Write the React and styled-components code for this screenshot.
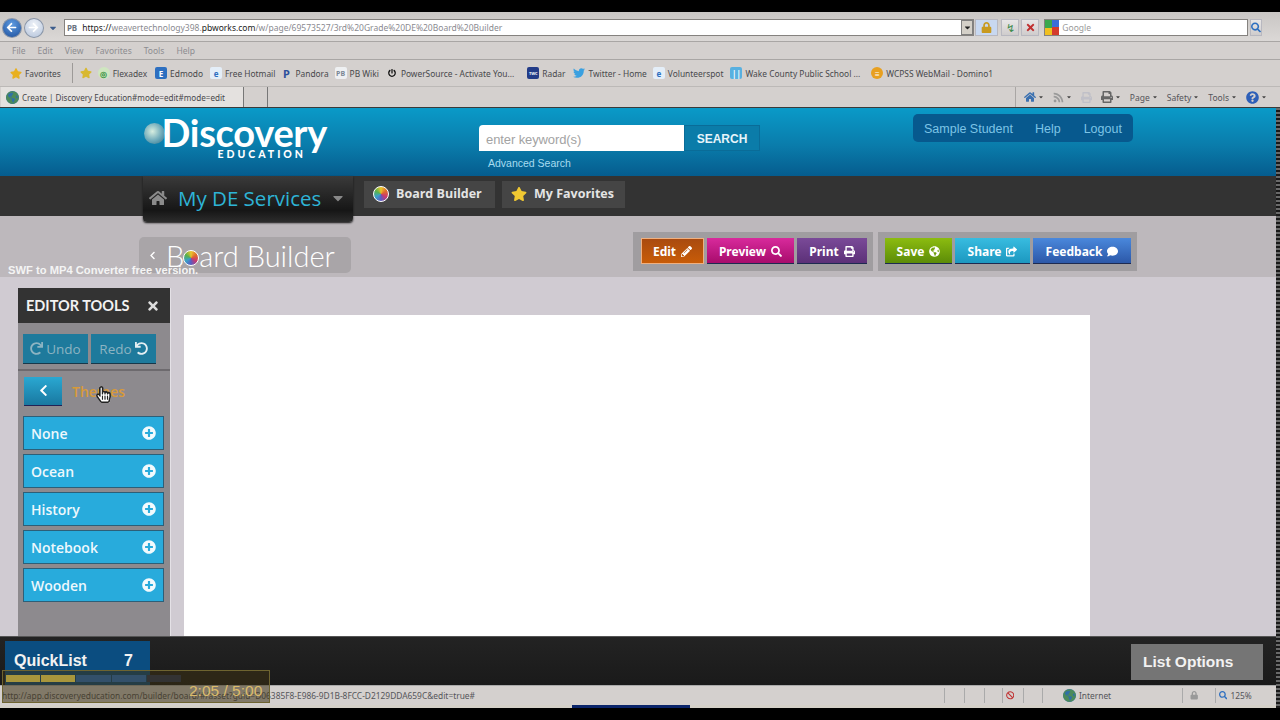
import React from 'react';
import styled, { createGlobalStyle } from 'styled-components';
import {
  FaArrowLeft, FaArrowRight, FaBan, FaCaretDown, FaChevronLeft, FaComment, FaGlobeAmericas, FaHandPointer, FaHome,
  FaLock, FaPencilAlt, FaPlusCircle, FaPrint, FaRedo, FaRegHandPointer, FaSearch, FaShareSquare, FaStar,
  FaTimes, FaTwitter, FaUndo, FaPowerOff, FaRss, FaQuestionCircle,
} from 'react-icons/fa';

const GlobalStyle = createGlobalStyle`
  html, body { margin: 0; padding: 0; background: #000; overflow: hidden; }
  * { box-sizing: border-box; }
`;

const Screen = styled.div`
  position: relative;
  width: 1280px;
  height: 720px;
  background: #000;
  padding-top: 12px;
  overflow: hidden;
  font-family: "Noto Sans", "Liberation Sans", sans-serif;
`;

/* browser chrome */
const Chrome = styled.div`
  background: #d4d0ce;
  height: 96px;
  color: #55555a;
  font-size: 8.5px;
  display: flex;
  flex-direction: column;
`;
const AddressRow = styled.div`
  height: 30px;
  display: flex;
  align-items: center;
  padding: 3px 18px 0 2px;
  border-bottom: 1px solid #a9a6a4;
  background: linear-gradient(#c9c6c4, #dbd8d6);
`;
const NavCircle = styled.span`
  width: 20px;
  height: 20px;
  margin-right: 2px;
  border-radius: 50%;
  display: flex;
  align-items: center;
  justify-content: center;
  color: #fff;
  font-size: 11px;
  background: ${p => p.$big ? 'radial-gradient(circle at 50% 30%, #5e9be0, #1d4f9c)' : 'radial-gradient(circle at 50% 30%, #eef2f8, #b4c3da)'};
  border: 1px solid #8a96a8;
`;
const DropArrow = styled.span`
  display: flex;
  width: 18px;
  padding-left: 2px;
  color: #3d5d8c;
  font-size: 10px;
`;
const UrlBox = styled.div`
  width: 912px;
  height: 17px;
  background: #fff;
  border: 1px solid #85827f;
  display: flex;
  align-items: center;
  padding-left: 2px;
  font-size: 8.5px;
  white-space: nowrap;
  color: #8a8a90;
`;
const PbMark = styled.span`
  color: #6a7480;
  font-weight: 700;
  font-size: 8px;
  margin-right: 5px;
`;
const Dark = styled.span`
  color: #222;
`;
const UrlDrop = styled.span`
  margin-left: auto;
  width: 12px;
  height: 15px;
  background: #d4d0c8;
  border: 1px solid #808080;
  color: #222;
  display: flex;
  align-items: center;
  justify-content: center;
  font-size: 9px;
`;
const ChromeBtn = styled.span`
  width: ${p => p.$w || 20}px;
  height: 17px;
  margin-left: ${p => p.$gap || 2}px;
  display: flex;
  align-items: center;
  justify-content: center;
  font-size: 11px;
  color: ${p => p.$color || '#444'};
  background: ${p => p.$bg || 'linear-gradient(#e8e6e6, #cfcccc)'};
  border: 1px solid #b8b8c0;
`;
const SearchBox = styled.div`
  width: 204px;
  height: 17px;
  margin-left: 5px;
  background: #fff;
  border: 1px solid #85827f;
  display: flex;
  align-items: center;
  gap: 3px;
  color: #999;
  font-size: 8.5px;
`;
const GoogleMark = styled.span`
  width: 14px;
  height: 15px;
  background: conic-gradient(#3b6fd8 0 25%, #d43c2c 25% 50%, #f0c020 50% 75%, #3aa84c 75%);
`;
const MenuRow = styled.div`
  height: 19px;
  display: flex;
  align-items: center;
  gap: 12px;
  padding-left: 12px;
  color: #8c8c90;
  font-size: 8.5px;
  border-bottom: 1px solid #a9a6a4;
`;
const FavRow = styled.div`
  height: 27px;
  display: flex;
  align-items: center;
  padding-left: 10px;
  white-space: nowrap;
  color: #48484c;
  font-size: 8.4px;
  border-bottom: 1px solid #bcb9b7;
`;
const FavLabel = styled.span`
  display: flex;
  align-items: center;
  gap: 3px;
  margin-right: ${p => p.$gap || 0}px;
`;
const FavIcon = styled.span`
  width: 12px;
  height: 12px;
  flex: none;
  display: flex;
  align-items: center;
  justify-content: center;
  font-size: ${p => p.$fs || 8}px;
  font-weight: 700;
  color: ${p => p.$color || '#fff'};
  background: ${p => p.$bg || 'transparent'};
  border-radius: ${p => p.$round ? '50%' : '2px'};
`;
const FavDivider = styled.span`
  width: 1px;
  height: 20px;
  background: #9d9a98;
  margin: 0 7px 0 11px;
`;
const TabRow = styled.div`
  flex: 1;
  display: flex;
  align-items: flex-end;
  border-bottom: 1px solid #3a3a3a;
`;
const ActiveTab = styled.div`
  width: 243px;
  height: 20px;
  margin-left: 1px;
  padding-left: 5px;
  display: flex;
  align-items: center;
  gap: 3px;
  background: #e4e1df;
  border-right: 1px solid #777;
  color: #48484c;
  font-size: 8.1px;
  white-space: nowrap;
`;
const Globe = styled.span`
  width: 13px;
  height: 13px;
  flex: none;
  display: flex;
  align-items: center;
  justify-content: center;
  border-radius: 50%;
  color: #4c8a5a;
  background: #2f6fa8;
  font-size: 13px;
`;
const NewTab = styled.div`
  width: 24px;
  height: 20px;
  background: #d4d0ce;
  border-right: 1px solid #777;
`;
const CommandBar = styled.div`
  margin-left: auto;
  display: flex;
  align-items: center;
  gap: 9px;
  height: 20px;
  padding: 0 13px 0 8px;
  border-left: 1px solid #a9a6a4;
  font-size: 8.5px;
  color: #55555a;
`;
const Command = styled.span`
  display: flex;
  align-items: center;
  gap: 2px;
  font-size: ${p => p.$fs || 8.5}px;
  color: ${p => p.$color || '#55555a'};
`;
const Mini = styled.span`
  font-size: 6px;
  color: #444;
  display: flex;
`;

/* site */
const Middle = styled.div`
  display: flex;
  height: 600px;
`;
const Page = styled.div`
  width: 1276px;
  display: flex;
  flex-direction: column;
`;
const ScrollEdge = styled.div`
  flex: 1;
  background: repeating-linear-gradient(#6a6a6a 0 2px, #1a1a1a 2px 4px);
`;
const SiteHeader = styled.header`
  height: 68px;
  background: linear-gradient(#0a9ac8, #0a7cab 55%, #055c8e);
  display: flex;
  align-items: flex-start;
  padding-left: 143px;
`;
const Logo = styled.div`
  width: 336px;
  height: 52px;
  margin-top: 10px;
  display: flex;
  color: #fff;
`;
const LogoGlobe = styled.span`
  width: 21px;
  height: 21px;
  flex: none;
  margin: 5px -6px 0 1px;
  border-radius: 50%;
  background: radial-gradient(circle at 40% 40%, #d7eee0, #6aa7b8 55%, #2f6a80);
`;
const LogoWords = styled.div`
  display: flex;
  flex-direction: column;
  align-items: flex-end;
  width: 168px;
`;
const LogoMain = styled.span`
  font-family: "Lato", sans-serif;
  font-weight: 700;
  font-size: 38px;
  line-height: 29px;
  letter-spacing: -0.3px;
  white-space: nowrap;
`;
const LogoSub = styled.span`
  font-family: "Lato", sans-serif;
  font-weight: 900;
  font-size: 10.5px;
  letter-spacing: 3px;
  line-height: 10px;
  margin: 2px 21px 0 0;
`;
const SearchColumn = styled.div`
  width: 282px;
  margin-top: 17px;
`;
const SearchRow = styled.div`
  display: flex;
  height: 26px;
`;
const SearchInput = styled.div`
  width: 205px;
  background: #fff;
  border-radius: 4px 0 0 0;
  padding: 3px 0 0 7px;
  display: flex;
  align-items: center;
  font-family: "Liberation Sans", sans-serif;
  font-size: 13px;
  letter-spacing: -0.1px;
  color: #a3a3a3;
`;
const SearchButton = styled.div`
  width: 76px;
  background: #0b7ca9;
  border: 1px solid #0a6c98;
  padding-top: 2px;
  color: #e6f4fa;
  font-family: "Liberation Sans", sans-serif;
  font-weight: 700;
  font-size: 12px;
  display: flex;
  align-items: center;
  justify-content: center;
`;
const AdvancedLink = styled.div`
  margin: 6px 0 0 9px;
  font-family: "Liberation Sans", sans-serif;
  font-size: 10.5px;
  color: #a6dcf0;
`;
const UserPill = styled.div`
  width: 220px;
  height: 28px;
  margin: 6px 0 0 152px;
  padding: 2px 0 0 11px;
  border-radius: 5px;
  background: #07598e;
  display: flex;
  align-items: center;
  font-family: "Liberation Sans", sans-serif;
  font-size: 12.5px;
  color: #7cc4e6;
`;
const UserLink = styled.span`
  margin-right: ${p => p.$gap}px;
  white-space: nowrap;
`;
const NavBar = styled.nav`
  height: 40px;
  background: #333;
  display: flex;
  padding-left: 143px;
  align-items: flex-start;
  position: relative;
  z-index: 1;
`;
const ServicesTab = styled.div`
  width: 210px;
  height: 46px;
  border-radius: 0 0 4px 4px;
  background: linear-gradient(#3a3a3a, #161616 75%, #2c2c2c);
  box-shadow: 0 1px 2px #111;
  display: flex;
  align-items: center;
  padding-bottom: 3px;
  color: #888;
  margin-right: 11px;
`;
const HomeCell = styled.span`
  width: 30px;
  display: flex;
  justify-content: center;
  font-size: 18px;
  color: #8b8b8b;
`;
const ServicesText = styled.span`
  font-family: "Open Sans", sans-serif;
  font-size: 20.5px;
  color: #2eb4d6;
  margin: 0 9px 0 5px;
  white-space: nowrap;
`;
const NavPill = styled.div`
  height: 27px;
  width: ${p => p.$w}px;
  margin: 5px 7px 0 0;
  padding: 0 0 2px 9px;
  background: #454545;
  display: flex;
  align-items: center;
  gap: 7px;
  font-family: "Open Sans", sans-serif;
  font-weight: 700;
  font-size: 12.5px;
  color: #e4e4e4;
  white-space: nowrap;
`;
const ColorWheel = styled.span`
  width: ${p => p.$size}px;
  height: ${p => p.$size}px;
  flex: none;
  display: inline-block;
  border-radius: 50%;
  border: 1px solid #fff;
  background: conic-gradient(#e9c52c, #e06a2c, #c83a70, #5a5ac0, #3aa0c8, #5ab04c, #e9c52c);
`;
const SubHeader = styled.div`
  height: 61px;
  background: #bdb8bc;
  display: flex;
  padding: 16px 0 0 139px;
`;
const BoardBadge = styled.div`
  width: 212px;
  height: 36px;
  margin-top: 5px;
  border-radius: 5px;
  background: #a9a5a8;
  display: flex;
  align-items: center;
  padding-left: 9px;
  font-family: "Lato", sans-serif;
  font-weight: 300;
  font-size: 29px;
  color: #fff;
  white-space: nowrap;
`;
const BadgeBack = styled.span`
  display: flex;
  font-size: 9px;
  margin-right: 9px;
`;
const BoardO = styled(ColorWheel)`
  margin: 0 0 0 -1px;
  transform: translateY(3px);
`;
const Tools = styled.div`
  display: flex;
  gap: 5px;
  margin-left: 282px;
`;
const ToolGroup = styled.div`
  height: 39px;
  padding: 6px 6px 0 ${p => p.$left}px;
  background: #a09da0;
  display: flex;
  gap: 3px;
`;
const ToolButton = styled.button`
  width: ${p => p.$w}px;
  height: 26px;
  border: 0;
  border-bottom: 1px solid #1d2a50;
  outline: ${p => p.$active ? '1px solid #f0b080' : 'none'};
  outline-offset: -1px;
  padding: 2px 0 0;
  display: flex;
  align-items: center;
  justify-content: center;
  gap: 5px;
  font-family: "Noto Sans", sans-serif;
  font-weight: 700;
  font-size: 12px;
  color: #fff;
  background: linear-gradient(${p => p.$from}, ${p => p.$to});
`;
const ToolIcon = styled.span`
  display: flex;
  font-size: 11px;
`;
const Content = styled.main`
  flex: 1;
  min-height: 0;
  background: #d0cbd2;
  display: flex;
  padding: 11px 0 0 18px;
  gap: 13px;
`;
const EditorPanel = styled.aside`
  width: 153px;
  background: #8d8a8e;
  border-right: 1px solid #e4e1e6;
  position: relative;
`;
const PanelTitle = styled.div`
  height: 35px;
  background: #333;
  display: flex;
  align-items: center;
  justify-content: space-between;
  padding: 0 10px 0 8px;
  font-family: "Lato", sans-serif;
  font-weight: 700;
  font-size: 14.5px;
  color: #f2f2f2;
`;
const CloseMark = styled.span`
  display: flex;
  font-size: 14px;
  color: #ddd;
`;
const UndoRow = styled.div`
  height: 48px;
  display: flex;
  gap: 3px;
  padding: 11px 0 0 5px;
  border-bottom: 2px solid #6d6a6e;
`;
const HistoryButton = styled.div`
  width: 65px;
  height: 30px;
  background: #1e7a9c;
  border-bottom: 1px solid #17384a;
  display: flex;
  align-items: center;
  justify-content: center;
  gap: 3px;
  font-family: "Open Sans", sans-serif;
  font-size: 13.5px;
  color: #8cb4c2;
`;
const HistoryIcon = styled.span`
  display: flex;
  font-size: 13px;
  color: ${p => p.$bright ? '#e4eef2' : '#8cb4c2'};
`;
const BackRow = styled.div`
  height: 45px;
  display: flex;
  align-items: center;
  padding: 0 0 5px 6px;
  gap: 10px;
`;
const BackButton = styled.div`
  width: 38px;
  height: 29px;
  background: linear-gradient(#2aa8d2, #1978a0);
  border-bottom: 1px solid #225;
  display: flex;
  align-items: center;
  justify-content: center;
  color: #fff;
  font-size: 13px;
`;
const ThemesLabel = styled.span`
  font-family: "Open Sans", sans-serif;
  font-weight: 600;
  font-size: 14px;
  color: #d89a38;
`;
const HandCursor = styled.span`
  position: absolute;
  left: 77px;
  top: 98px;
  width: 14px;
  height: 18px;
  font-size: 17px;
`;
const HandLayer = styled.span`
  position: absolute;
  left: 0;
  top: 0;
  display: flex;
  color: ${p => p.$color};
`;
const ThemeList = styled.div`
  display: flex;
  flex-direction: column;
  gap: 4px;
  padding: 0 6px 0 5px;
`;
const ThemeRow = styled.div`
  height: 34px;
  background: #28abdc;
  border: 1px solid #2d5f78;
  display: flex;
  align-items: center;
  justify-content: space-between;
  padding: 0 7px;
  font-family: "Open Sans", sans-serif;
  font-weight: 600;
  font-size: 14px;
  color: #eef8fc;
`;
const PlusIcon = styled.span`
  display: flex;
  font-size: 14px;
  color: #f2fafd;
`;
const Canvas = styled.div`
  width: 906px;
  margin-top: 27px;
  background: #fff;
`;
const BottomBar = styled.div`
  height: 49px;
  background: linear-gradient(#232323, #1a1a1a);
  border-top: 1px solid #555;
  display: flex;
  justify-content: space-between;
  padding: 4px 13px 0 5px;
  font-family: "Liberation Sans", sans-serif;
  font-weight: 700;
  color: #f2f2f2;
`;
const QuickList = styled.div`
  width: 145px;
  height: 45px;
  background: #0b4d80;
  display: flex;
  padding: 11px 0 0 9px;
  font-size: 16px;
`;
const QuickCount = styled.span`
  margin-left: 37px;
`;
const ListOptions = styled.div`
  width: 132px;
  height: 36px;
  margin-top: 3px;
  background: #757575;
  display: flex;
  align-items: center;
  padding-left: 12px;
  font-size: 15.5px;
`;

/* status bar */
const StatusBar = styled.div`
  height: 20px;
  background: #d4d0ce;
  border-top: 1px solid #aaa;
  display: flex;
  align-items: center;
  padding-left: 2px;
  font-size: 8.4px;
  color: #55555a;
`;
const StatusUrl = styled.span`
  width: 942px;
  white-space: nowrap;
`;
const StatusCell = styled.span`
  width: ${p => p.$w}px;
  height: 15px;
  flex: none;
  display: flex;
  align-items: center;
  gap: 3px;
  padding-left: ${p => p.$pad || 0}px;
  border-left: 1px solid #aaa;
`;
const Taskbar = styled.div`
  height: 3px;
  display: flex;
  background: #d4d0c8;
  padding-left: 572px;
`;
const TaskActive = styled.span`
  width: 118px;
  background: #0a246a;
`;

/* overlays */
const Watermark = styled.div`
  position: absolute;
  left: 8px;
  top: 264px;
  font-family: "Liberation Sans", sans-serif;
  font-weight: 700;
  font-size: 11.2px;
  color: #f4f4f4;
  white-space: nowrap;
  z-index: 3;
`;
const Player = styled.div`
  position: absolute;
  left: 2px;
  top: 670px;
  width: 268px;
  height: 33px;
  background: rgba(60, 50, 20, 0.55);
  border: 1px solid #6e6430;
  padding: 4px 0 0 3px;
  z-index: 3;
`;
const Progress = styled.div`
  display: flex;
  width: 175px;
  height: 7px;
  gap: 1px;
`;
const ProgressCell = styled.span`
  flex: 1;
  background: ${p => p.$fill ? '#a8963c' : p.$dim ? '#333' : '#33506a'};
`;
const PlayerTime = styled.div`
  position: absolute;
  left: 186px;
  top: 11px;
  font-family: "Liberation Sans", sans-serif;
  font-size: 15.5px;
  color: #dcbc6c;
  white-space: nowrap;
`;

const favorites = [
  { label: 'Flexadex', bg: '#cfe6c0', color: '#2f8f3a', mark: '◎', round: true, gap: 8 },
  { label: 'Edmodo', bg: '#2d6fc0', mark: 'E', gap: 7 },
  { label: 'Free Hotmail', bg: '#e4eef8', color: '#2d6fc0', mark: 'e', gap: 5 },
  { label: 'Pandora', color: '#2b4f9c', mark: 'P', fs: 11, gap: 6 },
  { label: 'PB Wiki', bg: '#eef0f2', color: '#7a8794', mark: 'PB', fs: 7, gap: 7 },
  { label: 'PowerSource - Activate You...', color: '#111', icon: <FaPowerOff />, gap: 13 },
  { label: 'Radar', bg: '#233c88', mark: 'TWC', fs: 4, gap: 8 },
  { label: 'Twitter - Home', color: '#3aa0e0', icon: <FaTwitter />, fs: 12, gap: 6 },
  { label: 'Volunteerspot', bg: '#e4eef8', color: '#2d6fc0', mark: 'e', gap: 7 },
  { label: 'Wake County Public School ...', bg: '#58b0e0', mark: '||', gap: 11 },
  { label: 'WCPSS WebMail - Domino1', bg: '#e8a020', color: '#fff', mark: '≡', round: true, gap: 0 },
];

const leftTools = [
  { label: 'Edit', w: 63, from: '#a84a10', to: '#c85c08', icon: <FaPencilAlt />, active: true },
  { label: 'Preview', w: 87, from: '#d82a9c', to: '#a80c6c', icon: <FaSearch /> },
  { label: 'Print', w: 70, from: '#7a4a98', to: '#5c3078', icon: <FaPrint /> },
];
const rightTools = [
  { label: 'Save', w: 67, from: '#8cbc10', to: '#5c8c08', icon: <FaGlobeAmericas /> },
  { label: 'Share', w: 75, from: '#38bce0', to: '#1c98c0', icon: <FaShareSquare /> },
  { label: 'Feedback', w: 98, from: '#4a88dc', to: '#2c58a8', icon: <FaComment /> },
];
const themes = ['None', 'Ocean', 'History', 'Notebook', 'Wooden'];

const renderTool = t => (
  <ToolButton key={t.label} $w={t.w} $from={t.from} $to={t.to} $active={t.active}>
    {t.label} <ToolIcon>{t.icon}</ToolIcon>
  </ToolButton>
);

const App = () => (
  <Screen>
    <GlobalStyle />
    <Chrome>
      <AddressRow>
        <NavCircle $big><FaArrowLeft /></NavCircle>
        <NavCircle><FaArrowRight /></NavCircle>
        <DropArrow><FaCaretDown /></DropArrow>
        <UrlBox>
          <PbMark>PB</PbMark>
          <Dark>https://</Dark>weavertechnology398.<Dark>pbworks.com</Dark>/w/page/69573527/3rd%20Grade%20DE%20Board%20Builder
          <UrlDrop><FaCaretDown /></UrlDrop>
        </UrlBox>
        <ChromeBtn $w={23} $gap={1} $color="#c89a20" $bg="#c8d8f0"><FaLock /></ChromeBtn>
        <ChromeBtn $w={18} $gap={3} $color="#3a8a4a">↯</ChromeBtn>
        <ChromeBtn $w={18} $color="#c03030"><FaTimes /></ChromeBtn>
        <SearchBox><GoogleMark />Google</SearchBox>
        <ChromeBtn $w={12} $color="#2d6fc0"><FaSearch /></ChromeBtn>
      </AddressRow>
      <MenuRow>
        <span>File</span><span>Edit</span><span>View</span><span>Favorites</span><span>Tools</span><span>Help</span>
      </MenuRow>
      <FavRow>
        <FavLabel>
          <FavIcon $color="#e8b020" $fs={13}><FaStar /></FavIcon>Favorites
        </FavLabel>
        <FavDivider />
        <FavLabel $gap={6}><FavIcon $color="#d8b830" $fs={12}><FaStar /></FavIcon></FavLabel>
        {favorites.map(f => (
          <FavLabel key={f.label} $gap={f.gap}>
            <FavIcon $bg={f.bg} $color={f.color} $fs={f.fs} $round={f.round}>{f.icon || f.mark}</FavIcon>
            {f.label}
          </FavLabel>
        ))}
      </FavRow>
      <TabRow>
        <ActiveTab>
          <Globe><FaGlobeAmericas /></Globe>
          Create | Discovery Education#mode=edit#mode=edit
        </ActiveTab>
        <NewTab />
        <CommandBar>
          <Command $fs={12} $color="#3a70b0"><FaHome /><Mini><FaCaretDown /></Mini></Command>
          <Command $fs={11} $color="#9a9a9a"><FaRss /><Mini><FaCaretDown /></Mini></Command>
          <Command $fs={11} $color="#c0c0c8"><FaPrint /></Command>
          <Command $fs={12} $color="#666"><FaPrint /><Mini><FaCaretDown /></Mini></Command>
          <Command>Page<Mini><FaCaretDown /></Mini></Command>
          <Command>Safety<Mini><FaCaretDown /></Mini></Command>
          <Command>Tools<Mini><FaCaretDown /></Mini></Command>
          <Command $fs={13} $color="#2d5fb8"><FaQuestionCircle /><Mini><FaCaretDown /></Mini></Command>
        </CommandBar>
      </TabRow>
    </Chrome>
    <Middle>
      <Page>
        <SiteHeader>
          <Logo>
            <LogoGlobe />
            <LogoWords>
              <LogoMain>Discovery</LogoMain>
              <LogoSub>EDUCATION</LogoSub>
            </LogoWords>
          </Logo>
          <SearchColumn>
            <SearchRow>
              <SearchInput>enter keyword(s)</SearchInput>
              <SearchButton>SEARCH</SearchButton>
            </SearchRow>
            <AdvancedLink>Advanced Search</AdvancedLink>
          </SearchColumn>
          <UserPill>
            <UserLink $gap={22}>Sample Student</UserLink>
            <UserLink $gap={23}>Help</UserLink>
            <UserLink $gap={0}>Logout</UserLink>
          </UserPill>
        </SiteHeader>
        <NavBar>
          <ServicesTab>
            <HomeCell><FaHome /></HomeCell>
            <ServicesText>My DE Services</ServicesText>
            <FaCaretDown />
          </ServicesTab>
          <NavPill $w={131}><ColorWheel $size={16} />Board Builder</NavPill>
          <NavPill $w={123}><FaStar color="#f0c832" size={16} />My Favorites</NavPill>
        </NavBar>
        <SubHeader>
          <BoardBadge>
            <BadgeBack><FaChevronLeft /></BadgeBack>
            B<BoardO $size={16} />ard Builder
          </BoardBadge>
          <Tools>
            <ToolGroup $left={8}>{leftTools.map(renderTool)}</ToolGroup>
            <ToolGroup $left={7}>{rightTools.map(renderTool)}</ToolGroup>
          </Tools>
        </SubHeader>
        <Content>
          <EditorPanel>
            <PanelTitle>EDITOR TOOLS<CloseMark><FaTimes /></CloseMark></PanelTitle>
            <UndoRow>
              <HistoryButton><HistoryIcon><FaRedo /></HistoryIcon>Undo</HistoryButton>
              <HistoryButton>Redo<HistoryIcon $bright><FaUndo /></HistoryIcon></HistoryButton>
            </UndoRow>
            <BackRow>
              <BackButton><FaChevronLeft /></BackButton>
              <ThemesLabel>Themes</ThemesLabel>
            </BackRow>
            <HandCursor>
              <HandLayer $color="#fff"><FaHandPointer /></HandLayer>
              <HandLayer $color="#222"><FaRegHandPointer /></HandLayer>
            </HandCursor>
            <ThemeList>
              {themes.map(t => (
                <ThemeRow key={t}>{t}<PlusIcon><FaPlusCircle /></PlusIcon></ThemeRow>
              ))}
            </ThemeList>
          </EditorPanel>
          <Canvas />
        </Content>
        <BottomBar>
          <QuickList>QuickList<QuickCount>7</QuickCount></QuickList>
          <ListOptions>List Options</ListOptions>
        </BottomBar>
        <StatusBar>
          <StatusUrl>http://app.discoveryeducation.com/builder/board/#/asset?guid=D06385F8-E986-9D1B-8FCC-D2129DDA659C&amp;edit=true#</StatusUrl>
          <StatusCell $w={20} />
          <StatusCell $w={20} />
          <StatusCell $w={18} />
          <StatusCell $w={21} $pad={3}><FaBan color="#c03030" /></StatusCell>
          <StatusCell $w={19} />
          <StatusCell $w={140} $pad={20}><Globe><FaGlobeAmericas /></Globe>Internet</StatusCell>
          <StatusCell $w={33} $pad={7}><FaLock color="#999" /></StatusCell>
          <StatusCell $w={61} $pad={3}><FaSearch color="#2d6fc0" />125%</StatusCell>
        </StatusBar>
        <Taskbar><TaskActive /></Taskbar>
      </Page>
      <ScrollEdge />
    </Middle>
    <Watermark>SWF to MP4 Converter free version.</Watermark>
    <Player>
      <Progress>
        <ProgressCell $fill /><ProgressCell $fill /><ProgressCell /><ProgressCell /><ProgressCell $dim />
      </Progress>
      <PlayerTime>2:05 / 5:00</PlayerTime>
    </Player>
  </Screen>
);

export default App;
